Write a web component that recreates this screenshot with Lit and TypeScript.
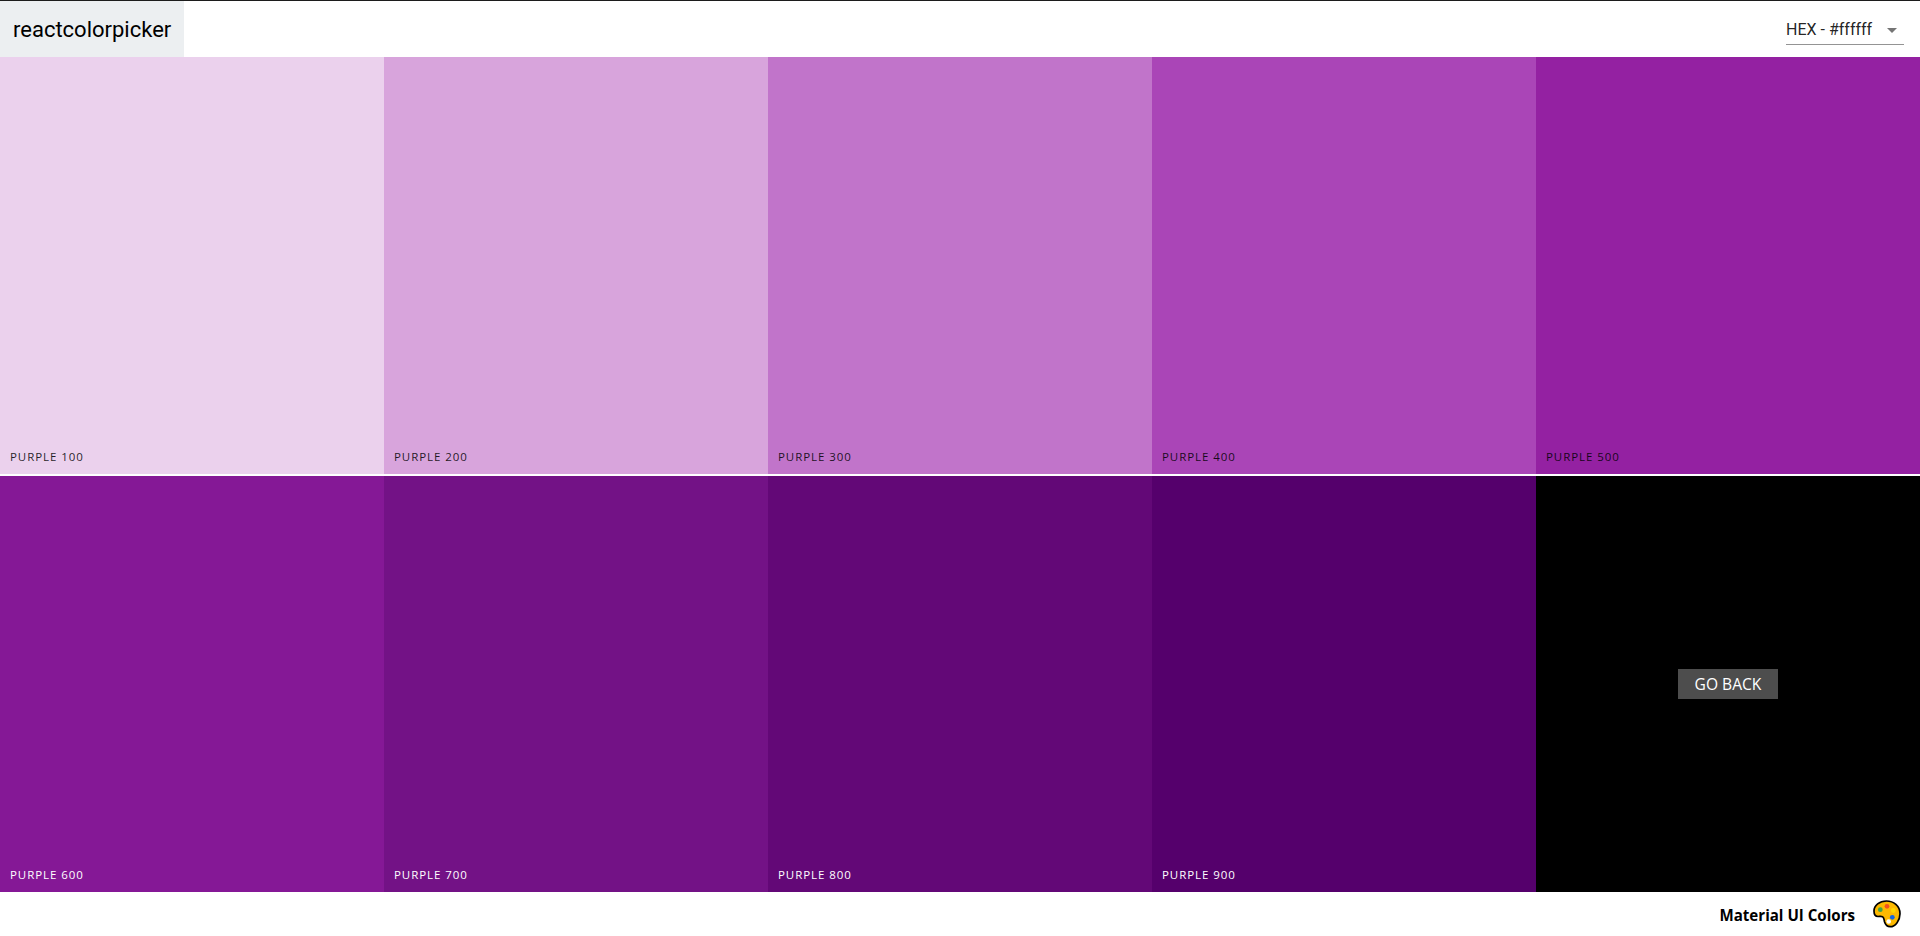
import { LitElement, html, css } from "lit";
import { customElement } from "lit/decorators.js";

const SHADES: [string, string, string][] = [
  ["PURPLE 100", "#ebd1ed", "dark"],
  ["PURPLE 200", "#d8a4dc", "dark"],
  ["PURPLE 300", "#c174ca", "dark"],
  ["PURPLE 400", "#aa45b7", "dark"],
  ["PURPLE 500", "#9421a2", "dark"],
  ["PURPLE 600", "#851896", "light"],
  ["PURPLE 700", "#731286", "light"],
  ["PURPLE 800", "#630877", "light"],
  ["PURPLE 900", "#55006c", "light"],
];

@customElement("app-root")
export class AppRoot extends LitElement {
  static styles = css`
    :host { display: flex; flex-direction: column; height: 936px; background: #fff; border-top: 1px solid #1c1c1c; box-sizing: border-box; overflow: hidden; }
    header { display: flex; justify-content: space-between; align-items: stretch; height: 56px; flex: none; }
    .logo { width: 184px; background: #eceff1; display: flex; align-items: center; padding-left: 13px; box-sizing: border-box; font: 400 22px Roboto, sans-serif; color: #000; }
    .select { width: 118px; margin: 11px 16px 0 0; border-bottom: 1px solid #949494; display: flex; align-items: flex-start; justify-content: space-between; font: 400 16px Roboto, sans-serif; color: rgba(0,0,0,.87); padding-top: 8px; height: 24px; }
    .arrow { width: 0; height: 0; border-left: 5px solid transparent; border-right: 5px solid transparent; border-top: 5px solid #757575; margin: 8px 7px 0 0; }
    .grid { flex: none; height: 835px; display: grid; grid-template-columns: repeat(5, 384px); grid-template-rows: 417px 416px; row-gap: 2px; }
    .box { display: flex; align-items: flex-end; padding: 0 0 9px 10px; box-sizing: border-box; font: 400 11.5px "Open Sans", sans-serif; letter-spacing: 0.92px; line-height: 16px; }
    .dark { color: rgba(0,0,0,.85); }
    .light { color: #fff; }
    .back { background: #000; display: flex; align-items: center; justify-content: center; }
    .btn { width: 100px; height: 30px; background: rgba(255,255,255,.3); color: #fff; display: flex; align-items: center; justify-content: center; font: 400 15.6px "Open Sans", sans-serif; }
    footer { flex: 1; display: flex; justify-content: flex-end; align-items: center; gap: 18px; padding-right: 19px; font: 700 15.1px "Open Sans", sans-serif; color: #000; }
    footer span { margin-top: 2px; }
    svg { display: block; }
  `;

  render() {
    return html`
      <header>
        <div class="logo">reactcolorpicker</div>
        <div class="select"><span>HEX - #ffffff</span><i class="arrow"></i></div>
      </header>
      <div class="grid">
        ${SHADES.map(([n, c, t]) => html`<div class="box ${t}" style="background:${c}">${n}</div>`)}
        <div class="back"><div class="btn">GO BACK</div></div>
      </div>
      <footer>
        <span>Material UI Colors</span>
        <svg width="28" height="28" viewBox="0 0 28 28">
          <path d="M13.500 1C6.500 1 1 5.500 1 11c0 3.500 1.500 5.500 4 5.500 1.800 0 3.300-.4 4.600 .2 1.600 .8 1.400 3 1.900 5 .9 3 3.100 5 5.700 5 5.300 0 9.800-6.500 9.800-13C27 6 20.500 1 13.500 1z" fill="#fdb900" stroke="#000" stroke-width="1.700"/>
          <circle cx="7.300" cy="9.700" r="2.400" fill="#43a047"/>
          <circle cx="14" cy="6.300" r="2.400" fill="#f4511e"/>
          <circle cx="20.300" cy="10.500" r="2.400" fill="#ffd600"/>
          <circle cx="19.300" cy="17.300" r="2.400" fill="#1565e0"/>
          <circle cx="15.700" cy="21.500" r="2.300" fill="#fff"/>
        </svg>
      </footer>
    `;
  }
}
